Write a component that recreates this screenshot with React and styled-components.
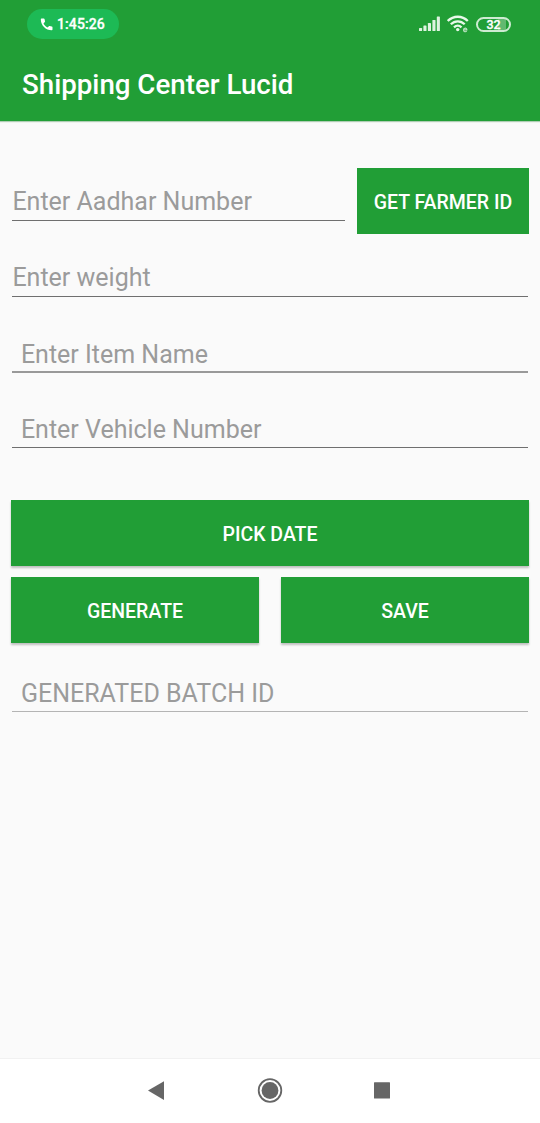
import React from "react";
import styled, { createGlobalStyle } from "styled-components";

const GlobalStyle = createGlobalStyle`
  * { box-sizing: border-box; }
  body { margin: 0; background: #fafafa; font-family: Roboto, sans-serif; }
`;

const Screen = styled.div`
  display: flex;
  flex-direction: column;
  width: 540px;
  height: 1123px;
  background: #fafafa;
`;

const Header = styled.header`
  flex: none;
  height: 121px;
  background: #219e36;
  color: #fff;
  box-shadow: 0 1px 1px rgba(33, 120, 50, 0.35);
`;

const StatusBar = styled.div`
  display: flex;
  align-items: center;
  justify-content: space-between;
  height: 48px;
  padding: 0 29px 0 27px;
`;

const CallPill = styled.div`
  display: flex;
  align-items: center;
  gap: 4px;
  width: 92px;
  height: 30px;
  padding-left: 13px;
  border-radius: 15px;
  background: #1dba55;
  font-size: 14px;
  font-weight: 500;
  letter-spacing: 0.1px;
  -webkit-text-stroke: 0.3px #fff;
`;

const StatusIcons = styled.div`
  display: flex;
  align-items: center;
  gap: 7px;
  svg { display: block; }
`;

const Battery = styled.div`
  display: flex;
  align-items: center;
  justify-content: center;
  width: 35px;
  height: 15px;
  border: 2px solid #cdebd1;
  border-radius: 8px;
  background: linear-gradient(to right, transparent 20px, #62b970 20px, #62b970 28px, transparent 28px);
  font-size: 12.5px;
  font-weight: 500;
  line-height: 11px;
  letter-spacing: -0.2px;
  -webkit-text-stroke: 0.3px #fff;
`;

const Title = styled.h1`
  margin: 0;
  padding: 20px 0 0 22px;
  font-size: 27.7px;
  font-weight: 500;
  line-height: 34px;
`;

const Form = styled.main`
  flex: 1;
  display: flex;
  flex-direction: column;
  padding: 47px 11px 0;
`;

const Row = styled.div`
  display: flex;
  gap: ${(p) => p.$gap}px;
  margin-top: ${(p) => p.$top || 0}px;
`;

const Field = styled.div`
  flex: ${(p) => (p.$grow ? 1 : "none")};
  display: flex;
  align-items: flex-end;
  height: ${(p) => p.$height}px;
  margin: 0 ${(p) => (p.$grow ? 0 : 1.4)}px 0 1.4px;
  padding: 0 0 ${(p) => p.$drop}px ${(p) => p.$indent || 0}px;
  border-bottom: ${(p) => p.$thick || 1}px solid ${(p) => p.$line || "#6f6f6f"};
  color: #9b9b9b;
  font-size: 25px;
  line-height: 30px;
  white-space: nowrap;
`;

const Button = styled.button`
  display: flex;
  align-items: center;
  justify-content: center;
  flex: ${(p) => (p.$width ? "none" : 1)};
  width: ${(p) => (p.$width ? `${p.$width}px` : "auto")};
  height: 66px;
  padding: 3px 0 0;
  border: 0;
  background: #219e36;
  box-shadow: ${(p) => (p.$flat ? "none" : "0 1.5px 2px rgba(0, 0, 0, 0.24)")};
  color: #fff;
  font-family: inherit;
  font-size: 19.5px;
  font-weight: 500;
  white-space: nowrap;
`;

const NavBar = styled.nav`
  flex: none;
  display: flex;
  justify-content: center;
  align-items: center;
  height: 65px;
  border-top: 1px solid #f1f1f1;
  background: #fff;
  svg { display: block; }
`;

const PhoneIcon = () => (
  <svg width="13" height="13" viewBox="0 0 13 13" fill="#fff">
    <path d="M.8 1.200C.8.800 1.100.500 1.500.500h2.300c.4 0 .7.300.8.700l.4 2.100c.1.300 0 .600-.2.800L3.500 5.500c.9 1.800 2.200 3.100 4 4l1.400-1.300c.2-.2.500-.3.800-.2l2.100.4c.4.100.7.400.7.800v2.300c0 .500-.3.800-.7.800C5.700 12.300.8 7.300.8 1.200z" />
  </svg>
);

const SignalIcon = () => (
  <svg width="21" height="16" viewBox="0 0 21 16" fill="#dff3e1">
    <rect x="0" y="12" width="3.100" height="3" rx=".6" />
    <rect x="4.400" y="9.500" width="3.100" height="5.500" rx=".6" />
    <rect x="8.900" y="7" width="3.100" height="8" rx=".6" />
    <rect x="13.400" y="4" width="3.100" height="11" rx=".6" />
    <rect x="17.800" y="0.500" width="3.100" height="14.500" rx=".6" />
  </svg>
);

const WifiIcon = () => (
  <svg width="22" height="18" viewBox="0 0 22 18" fill="none" stroke="#e9f8ea" strokeWidth="2.300">
    <path d="M.7 6C6.400.300 15.100.300 20.800 6M3.800 9.300c4-4 9.900-4 13.900 0M7 12.400c2.300-2.200 5.200-2.200 7.500 0" />
    <circle cx="10.700" cy="14.600" r="1.700" fill="#e9f8ea" stroke="none" />
    <path d="M16.700 14.900h3.200c.1-2.400-3.400-2.400-3.400.1 0 2 2.200 2.200 3.200 1.200" strokeWidth="1.100" stroke="#bfe4c4" />
  </svg>
);

const NavIcons = () => (
  <svg width="244" height="26" viewBox="0 0 244 26" fill="#666">
    <path d="M0 12.500 16 3.300v18.600z" />
    <circle cx="122" cy="12.500" r="11.300" fill="none" stroke="#666" strokeWidth="1.800" />
    <circle cx="122" cy="12.500" r="8.400" />
    <rect x="226" y="4.200" width="16" height="16.300" rx=".5" />
  </svg>
);

export default function App() {
  return (
    <Screen>
      <GlobalStyle />
      <Header>
        <StatusBar>
          <CallPill>
            <PhoneIcon />
            <span>1:45:26</span>
          </CallPill>
          <StatusIcons>
            <SignalIcon />
            <WifiIcon />
            <Battery>32</Battery>
          </StatusIcons>
        </StatusBar>
        <Title>Shipping Center Lucid</Title>
      </Header>
      <Form>
        <Row $gap={12.5}>
          <Field $grow $height={53} $drop={3}>Enter Aadhar Number</Field>
          <Button $width={172} $flat>GET FARMER ID</Button>
        </Row>
        <Field $height={63} $drop={3}>Enter weight</Field>
        <Field $height={76} $drop={1} $indent={8.5} $thick={2} $line="#999">Enter Item Name</Field>
        <Field $height={75} $drop={2} $indent={8.5}>Enter Vehicle Number</Field>
        <Row $gap={0} $top={52}>
          <Button>PICK DATE</Button>
        </Row>
        <Row $gap={22} $top={11}>
          <Button>GENERATE</Button>
          <Button>SAVE</Button>
        </Row>
        <Field $height={69} $drop={2} $indent={8.5} $line="#b4b4b4">GENERATED BATCH ID</Field>
      </Form>
      <NavBar>
        <NavIcons />
      </NavBar>
    </Screen>
  );
}
